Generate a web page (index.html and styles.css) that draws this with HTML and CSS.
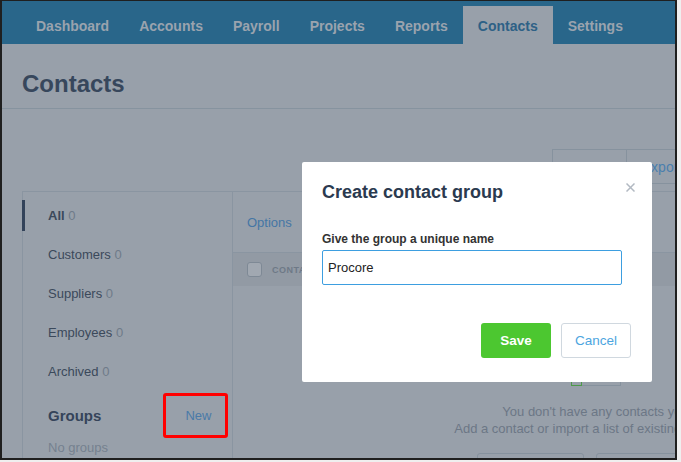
FILE: index.html
```html
<!DOCTYPE html>
<html>
<head>
  <meta charset="UTF-8">
  <title>Contacts</title>
  <link rel="stylesheet" href="styles.css">
</head>
<body>
  <div class="frame">
    <div class="app">
      <nav class="topnav">
        <a>Dashboard</a>
        <a>Accounts</a>
        <a>Payroll</a>
        <a>Projects</a>
        <a>Reports</a>
        <a class="active">Contacts</a>
        <a>Settings</a>
      </nav>

      <header class="page-head">
        <h1>Contacts</h1>
      </header>

      <main class="content">
        <div class="toolbar">
          <div class="btn-group">
            <button class="btn w-import">Import</button>
            <button class="btn w-export">Export</button>
          </div>
          <div class="btn-group">
            <button class="btn w-send">Send statements</button>
            <button class="btn btn-green w-new">New contact</button>
          </div>
        </div>

        <div class="panel">
          <aside class="sidebar">
            <ul class="filters">
              <li class="active">All <span class="count">0</span></li>
              <li>Customers <span class="count">0</span></li>
              <li>Suppliers <span class="count">0</span></li>
              <li>Employees <span class="count">0</span></li>
              <li>Archived <span class="count">0</span></li>
            </ul>
            <div class="groups-head">
              <h3>Groups</h3>
              <span class="callout"><a>New</a></span>
            </div>
            <p class="no-groups">No groups</p>
          </aside>

          <section class="list">
            <div class="list-bar"><a>Options</a></div>
            <div class="list-head">
              <span class="check"></span>
              <span>CONTACT</span>
            </div>
            <div class="empty">
              <div class="empty-icon"><span class="ico-a"></span><span class="ico-b"></span></div>
              <p>You don't have any contacts yet.<br>Add a contact or import a list of existing contacts.</p>
              <div class="empty-actions">
                <button class="btn w-add">Add contact</button>
                <button class="btn w-imp">Import contacts</button>
              </div>
            </div>
          </section>
        </div>
      </main>
    </div>

    <div class="modal">
      <div class="modal-head">
        <h2>Create contact group</h2>
        <svg class="close" width="9" height="9" viewBox="0 0 9 9">
          <path d="M0.5 0.5 L8.5 8.5 M8.5 0.5 L0.5 8.5" stroke="#b2b9c2" stroke-width="1.5" fill="none"/>
        </svg>
      </div>
      <div class="modal-body">
        <label for="group-name">Give the group a unique name</label>
        <input type="text" id="group-name" value="Procore">
      </div>
      <div class="modal-foot">
        <button class="save">Save</button>
        <button class="cancel">Cancel</button>
      </div>
    </div>
  </div>
</body>
</html>
```

FILE: styles.css
```css
body {
  margin: 0;
  background: #efefef;
  font-family: 'Liberation Sans', Arial, sans-serif;
}

.frame {
  position: relative;
  width: 677px;
  height: 460px;
  box-sizing: border-box;
  border: 2px solid #1f1f1f;
  border-top-width: 1px;
  overflow: hidden;
  background: #98a0aa;
}

.app {
  width: 977px;
}

/* top navigation */
.topnav {
  display: flex;
  align-items: flex-end;
  height: 43px;
  padding-left: 19px;
  background: #29668a;
}

.topnav a {
  height: 36px;
  line-height: 36px;
  padding: 2px 15px 0;
  font-size: 14px;
  font-weight: bold;
  color: #9aa3ae;
}

.topnav a.active {
  background: #98a0aa;
  color: #2e6186;
}

.page-head {
  padding: 26px 20px 10px;
  border-bottom: 1px solid #86939f;
}

h1 {
  margin: 0;
  font-size: 24px;
  line-height: 28px;
  color: #37475c;
}

.content {
  padding: 0 20px;
}

.toolbar {
  display: flex;
  justify-content: flex-end;
  gap: 10px;
  margin-top: 40px;
}

.btn-group {
  display: flex;
}

.btn {
  height: 35px;
  border: 1px solid #86929e;
  background: #98a0aa;
  color: #4a7fae;
  font-family: inherit;
  font-size: 14px;
  padding: 0;
}

.btn-group .btn + .btn { border-left: none; }
.btn-green { background: #3d8a2e; color: #a9b6a6; }

.w-import { width: 75px; }
.w-export { width: 71px; }
.w-send { width: 147px; }
.w-new { width: 104px; }
.w-add { width: 107px; border-radius: 3px; }
.w-imp { width: 118px; border-radius: 3px; }

/* contacts panel */
.panel {
  display: grid;
  grid-template-columns: 210px 1fr;
  margin-top: 7px;
  min-height: 420px;
  border: 1px solid #8a95a1;
}

.sidebar {
  border-right: 1px solid #8a95a1;
}

.filters {
  list-style: none;
  margin: 0;
  padding: 8px 0 0;
}

.filters li {
  height: 31px;
  line-height: 31px;
  margin-bottom: 8px;
  padding-left: 25px;
  font-size: 13px;
  color: #3b495b;
}

.filters li.active {
  margin-left: -1px;
  padding-left: 23px;
  border-left: 3px solid #33435a;
  font-weight: bold;
}

.count {
  font-weight: normal;
  color: #6f7b89;
}

.groups-head {
  display: flex;
  align-items: center;
  justify-content: space-between;
  height: 45px;
  margin-top: -2px;
  padding: 0 4px 0 25px;
}

.groups-head h3 {
  margin: 0;
  font-size: 15px;
  color: #35445a;
}

.callout {
  display: flex;
  align-items: center;
  justify-content: center;
  width: 65px;
  height: 45px;
  box-sizing: border-box;
  padding-left: 6px;
  border: 3px solid #ff0000;
  border-radius: 3px;
}

.callout a {
  font-size: 13px;
  color: #4a7aa8;
}

.no-groups {
  margin: 1px 0 0 25px;
  line-height: 18px;
  font-size: 13px;
  color: #75818f;
}

.list-bar {
  height: 60px;
  line-height: 60px;
  padding-left: 14px;
  border-bottom: 1px solid #8a95a1;
}

.list-bar a {
  font-size: 13px;
  color: #4576a5;
}

.list-head {
  display: flex;
  align-items: center;
  height: 33px;
  padding-left: 14px;
  background: #929aa4;
  font-size: 9px;
  font-weight: bold;
  letter-spacing: 0.5px;
  color: #6e7987;
}

.check {
  width: 13px;
  height: 13px;
  margin-right: 10px;
  border: 1px solid #7e8995;
  border-radius: 3px;
  background: #a1a8b1;
}

.empty {
  padding-top: 70px;
  text-align: center;
}

.empty-icon {
  display: flex;
  width: 50px;
  height: 30px;
  margin: 0 auto;
}

.ico-a {
  width: 9px;
  border: 1px solid #4e9a4a;
}

.ico-b {
  flex: 1;
  border: 1px solid #86929e;
  border-left: none;
}

.empty p {
  margin: 17px 0 0;
  font-size: 13px;
  line-height: 17px;
  color: #6c7786;
}

.empty-actions {
  display: flex;
  justify-content: center;
  gap: 12px;
  margin-top: 16px;
}

/* create group dialog */
.modal {
  position: absolute;
  left: 300px;
  top: 161px;
  width: 350px;
  height: 220px;
  background: white;
  border-radius: 2px;
}

.modal-head {
  display: flex;
  justify-content: space-between;
  align-items: flex-start;
  padding: 19px 17px 0 20px;
}

.modal-head h2 {
  margin: 0;
  font-size: 18px;
  line-height: 22px;
  color: #2b3a4f;
}

.close {
  margin-top: 2px;
}

.modal-body {
  padding: 0 30px 0 20px;
}

.modal-body label {
  display: block;
  margin-top: 29px;
  margin-bottom: 3px;
  font-size: 12px;
  line-height: 15px;
  font-weight: bold;
  color: #333;
}

.modal-body input {
  width: 300px;
  height: 35px;
  box-sizing: border-box;
  padding: 0 5px;
  border: 1px solid #3d9ee0;
  border-radius: 2px;
  font-family: inherit;
  font-size: 13px;
  color: #222;
  outline: none;
}

.modal-foot {
  display: flex;
  justify-content: flex-end;
  gap: 10px;
  margin-top: 38px;
  padding: 0 21px 0 20px;
}

.modal-foot button {
  width: 70px;
  height: 35px;
  border-radius: 3px;
  font-family: inherit;
  font-size: 13.5px;
  cursor: pointer;
}

.save {
  border: none;
  background: #4cc730;
  color: white;
  font-weight: bold;
}

.cancel {
  border: 1px solid #d0d8df;
  background: white;
  color: #4ca5e0;
}
```
